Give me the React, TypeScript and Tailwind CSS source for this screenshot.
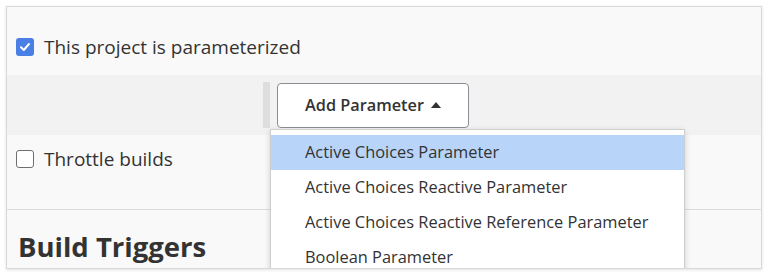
import React from 'react';

const items = [
  'Active Choices Parameter',
  'Active Choices Reactive Parameter',
  'Active Choices Reactive Reference Parameter',
  'Boolean Parameter',
];

const CheckBox: React.FC<{ checked?: boolean }> = ({ checked }) =>
  checked ? (
    <span className="flex h-[18px] w-[18px] shrink-0 items-center justify-center rounded-[3px] bg-[#4a7fe6]">
      <svg width="12" height="12" viewBox="0 0 12 12" fill="none">
        <path d="M2 6.3 4.8 9 10 3" stroke="white" strokeWidth="2" strokeLinecap="round" strokeLinejoin="round" />
      </svg>
    </span>
  ) : (
    <span className="h-[18px] w-[18px] shrink-0 rounded-[3px] border-[1.5px] border-[#6f6f6f] bg-white" />
  );

export default function App() {
  return (
    <div className="h-[276px] w-[768px] bg-white px-[6px] pt-[6px] font-['Open_Sans',sans-serif] text-[#333]">
      <div className="relative h-[263px] overflow-hidden border border-[#d9d9d9] bg-[#f9f9f9] shadow-[0_1px_3px_rgba(0,0,0,0.12)]">
        {/* parameterized */}
        <div className="flex h-[68px] items-center gap-[10px] pl-[9px] pt-[12px]">
          <CheckBox checked />
          <span className="text-[19px] leading-[20px]">This project is parameterized</span>
        </div>

        {/* add parameter band */}
        <div className="flex h-[60px] items-center bg-[#f2f2f2] pl-[256px]">
          <div className="h-[46px] w-[7px] bg-[#dedede]" />
          <button className="ml-[7px] flex h-[45px] w-[192px] items-center justify-center gap-[7px] rounded-[4px] border-[1.5px] border-[#8a8f96] bg-white text-[16.3px] font-semibold text-[#333]">
            Add Parameter
            <svg width="10" height="6" viewBox="0 0 10 6">
              <path d="M0 6 5 0 10 6Z" fill="#333" />
            </svg>
          </button>
        </div>

        {/* throttle */}
        <div className="flex h-[74px] items-start gap-[10px] pl-[9px] pt-[15px]">
          <CheckBox />
          <span className="text-[19px] leading-[18px]">Throttle builds</span>
        </div>

        <div className="border-t border-[#dcdcdc] pl-[11px] pt-[19px]">
          <h2 className="text-[27.5px] font-bold leading-[36px] text-[#333]">Build Triggers</h2>
        </div>

        {/* dropdown */}
        <div className="absolute left-[263px] top-[122px] w-[415px] border border-[#cfcfcf] bg-white pt-[5px] shadow-[0_2px_6px_rgba(0,0,0,0.18)]">
          {items.map((item, i) => (
            <div
              key={item}
              className={`flex h-[35px] items-center pl-[34px] text-[16.4px] text-[#333] ${i === 0 ? 'bg-[#b8d4f8]' : ''}`}
            >
              {item}
            </div>
          ))}
        </div>
      </div>
    </div>
  );
}
